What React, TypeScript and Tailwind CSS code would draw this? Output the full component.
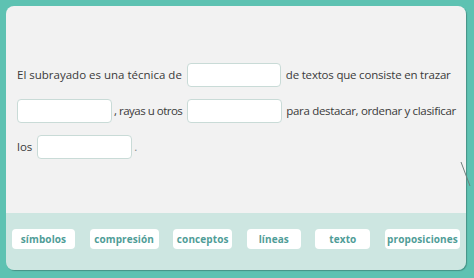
import React from "react";

const Blank = ({ w = "w-[95px]" }: { w?: string }) => (
  <span
    className={`inline-block ${w} h-[24px] bg-white border border-[#c9dbd7] rounded-[4px] align-middle`}
  />
);

const chips = [
  { label: "símbolos", w: "w-[63px]" },
  { label: "compresión", w: "w-[69px]" },
  { label: "conceptos", w: "w-[59px]" },
  { label: "líneas", w: "w-[54px]" },
  { label: "texto", w: "w-[55px]" },
  { label: "proposiciones", w: "w-[75px]" },
];

export default function App() {
  return (
    <div className="w-[474px] h-[278px] bg-[#5ec2b2] p-[6px] pb-[8px] relative">
      <div className="w-[460px] h-[264px] rounded-[8px] overflow-hidden flex flex-col shadow-[1px_1px_1px_rgba(0,0,0,0.25)]">
        {/* Sentence area */}
        <div
          className="flex-1 bg-[#f2f2f2] pt-[57px] pl-[11px] pr-[8px] flex flex-col gap-[12px] text-[#3a3a3a] text-[11.5px]"
          style={{ fontFamily: '"Open Sans", sans-serif' }}
        >
          <div className="flex items-center h-[24px]">
            <span>El subrayado es una técnica de</span>
            <span className="ml-[5px]"><Blank w="w-[94px]" /></span>
            <span className="ml-[5px] tracking-[-0.2px]">de textos que consiste en trazar</span>
          </div>
          <div className="flex items-center h-[24px]">
            <Blank w="w-[95px]" />
            <span className="ml-[2px] tracking-[-0.5px]">, rayas u otros</span>
            <span className="ml-[5px]"><Blank w="w-[95px]" /></span>
            <span className="ml-[4px] tracking-[-0.33px]">para destacar, ordenar y clasificar</span>
          </div>
          <div className="flex items-center h-[24px]">
            <span>los</span>
            <span className="ml-[5px]"><Blank w="w-[95px]" /></span>
            <span className="ml-[2px] text-[#888]">.</span>
          </div>
        </div>
        {/* Word bank */}
        <div
          className="h-[57px] bg-[#cde6e1] px-[6px] pt-[16px] flex justify-between items-start"
          style={{ fontFamily: '"Open Sans", sans-serif' }}
        >
          {chips.map((c) => (
            <div
              key={c.label}
              className={`${c.w} h-[20px] bg-white rounded-[4px] flex items-center justify-center text-[10px] font-bold text-[#4f9d97] tracking-[0.1px]`}
            >
              {c.label}
            </div>
          ))}
        </div>
      </div>
      <svg className="absolute left-[458px] top-[160px]" width="16" height="28" viewBox="0 0 16 28">
        <line x1="3" y1="2" x2="12" y2="26" stroke="#6f7f7c" strokeWidth="1" />
      </svg>
    </div>
  );
}
